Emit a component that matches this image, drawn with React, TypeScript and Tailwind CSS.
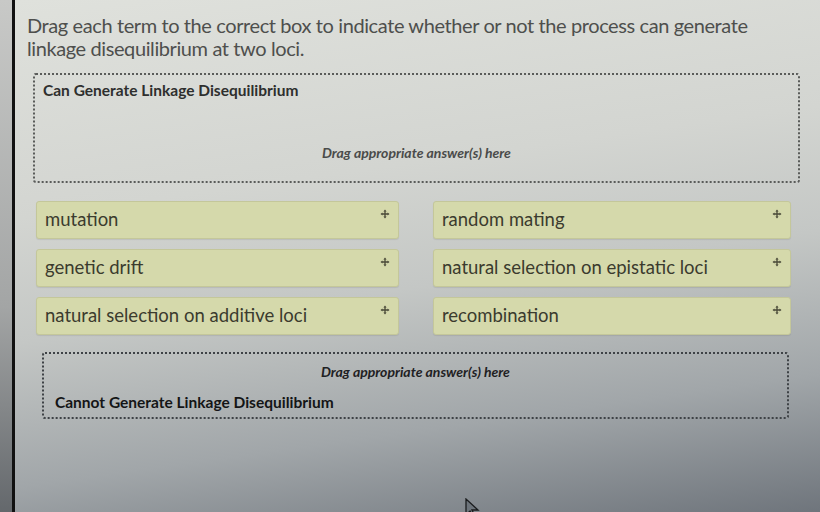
const terms: [string, string][] = [
  ['mutation', 'random mating'],
  ['genetic drift', 'natural selection on epistatic loci'],
  ['natural selection on additive loci', 'recombination'],
];

function MoveIcon() {
  return (
    <svg width="10" height="10" viewBox="0 0 10 10" className="absolute right-[8px] top-[7px]">
      <path d="M5 0.5 L6.6 2.4 H3.4 Z M5 9.5 L3.4 7.6 H6.6 Z M0.5 5 L2.4 3.4 V6.6 Z M9.5 5 L7.6 6.6 V3.4 Z" fill="#4a4a38" />
      <path d="M5 2 V8 M2 5 H8" stroke="#4a4a38" strokeWidth="1.3" />
    </svg>
  );
}

function Term({ label }: { label: string }) {
  return (
    <div className="relative flex h-[38px] items-center rounded-[3px] border border-[#c4c79a] bg-[#d5d9ab] pl-[8px] text-[18.5px] text-[#3b3b2e] shadow-[0_1px_1px_rgba(0,0,0,0.08)]">
      {label}
      <MoveIcon />
    </div>
  );
}

export default function App() {
  return (
    <div className="relative flex h-[512px] w-[820px] overflow-hidden font-['Lato',sans-serif]">
      <div className="w-[12px] bg-[linear-gradient(180deg,#c8c9c7_0%,#a3a5a5_60%,#64686c_100%)]" />
      <div className="w-[3px] bg-[#111]" />
      <div className="flex-1 bg-[linear-gradient(172deg,#dfe1dc_0%,#d3d5d1_35%,#c4c7c5_55%,#a1a6a9_78%,#6f757c_100%)] pl-[12px] pr-[18px] pt-[14px]">
        <h1 className="w-[770px] text-[20px] leading-[23px] tracking-[-0.4px] text-[#4e4f4d]">
          Drag each term to the correct box to indicate whether or not the process can generate linkage disequilibrium at two loci.
        </h1>

        <div className="ml-[6px] mt-[13px] flex h-[110px] w-[767px] flex-col rounded-[3px] border-2 border-dotted border-[#5a5c5a] px-[8px] pt-[4px]">
          <div className="text-[15.5px] font-bold text-[#2e2f2e]">Can Generate Linkage Disequilibrium</div>
          <div className="mt-[40px] text-center text-[14px] font-bold italic text-[#4a4b4a]">Drag appropriate answer(s) here</div>
        </div>

        <div className="ml-[9px] mt-[18px] grid w-[758px] grid-cols-[363px_358px] gap-x-[34px] gap-y-[10px]">
          {terms.map(([a, b]) => [<Term key={a} label={a} />, <Term key={b} label={b} />])}
        </div>

        <div className="ml-[15px] mt-[17px] flex h-[67px] w-[747px] flex-col rounded-[3px] border-2 border-dotted border-[#3e4246] px-[11px] pt-[7px]">
          <div className="text-center text-[14px] font-bold italic text-[#1f2123]">Drag appropriate answer(s) here</div>
          <div className="mt-[9px] text-[15.5px] font-bold text-[#141516]">Cannot Generate Linkage Disequilibrium</div>
        </div>
      </div>

      <svg width="20" height="20" viewBox="0 0 20 20" className="absolute left-[465px] top-[498px]">
        <path d="M1 1 L1 17 L5 13 L8 19 L10 18 L7 12 L13 12 Z" fill="#6d747b" stroke="#1a1c1e" strokeWidth="1.3" />
      </svg>
    </div>
  );
}
